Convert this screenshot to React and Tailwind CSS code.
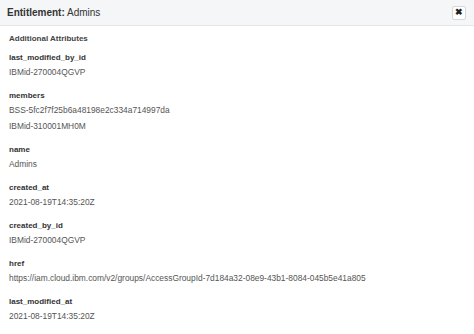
import React from 'react';

const attributes = [
  { key: 'last_modified_by_id', values: ['IBMid-270004QGVP'] },
  { key: 'members', values: ['BSS-5fc2f7f25b6a48198e2c334a714997da', 'IBMid-310001MH0M'] },
  { key: 'name', values: ['Admins'] },
  { key: 'created_at', values: ['2021-08-19T14:35:20Z'] },
  { key: 'created_by_id', values: ['IBMid-270004QGVP'] },
  { key: 'href', values: ['https://iam.cloud.ibm.com/v2/groups/AccessGroupId-7d184a32-08e9-43b1-8084-045b5e41a805'] },
  { key: 'last_modified_at', values: ['2021-08-19T14:35:20Z'] },
];

const App = () => {
  return (
    <div className="w-[474px] h-[334px] bg-white overflow-hidden rounded-b-[4px] font-['Liberation_Sans',Arial,sans-serif]">
      <div className="h-[26px] flex items-center justify-between pl-[7px] pr-[8px] bg-[#f5f6f7] border-b border-[#e4e6e8]">
        <h1 className="text-[10px] text-[#333]">
          <span className="font-bold">Entitlement:</span> Admins
        </h1>
        <button
          type="button"
          className="w-[14px] h-[14px] flex items-center justify-center bg-white border border-[#d6d8da] rounded-[2px] text-[#222] text-[9px] font-bold leading-none"
        >
          ✖
        </button>
      </div>
      <div className="pl-[9px] pt-[6px]">
        <h2 className="text-[8px] font-bold text-[#444] leading-[13.5px] mb-[5px]">Additional Attributes</h2>
        {attributes.map((attr) => (
          <div key={attr.key} className="mb-[9px]">
            <div className="text-[8px] font-bold text-[#333] leading-[13px]">{attr.key}</div>
            {attr.values.map((v) => (
              <div key={v} className="text-[8.4px] text-[#555] leading-[16px]">{v}</div>
            ))}
          </div>
        ))}
      </div>
    </div>
  );
};

export default App;
